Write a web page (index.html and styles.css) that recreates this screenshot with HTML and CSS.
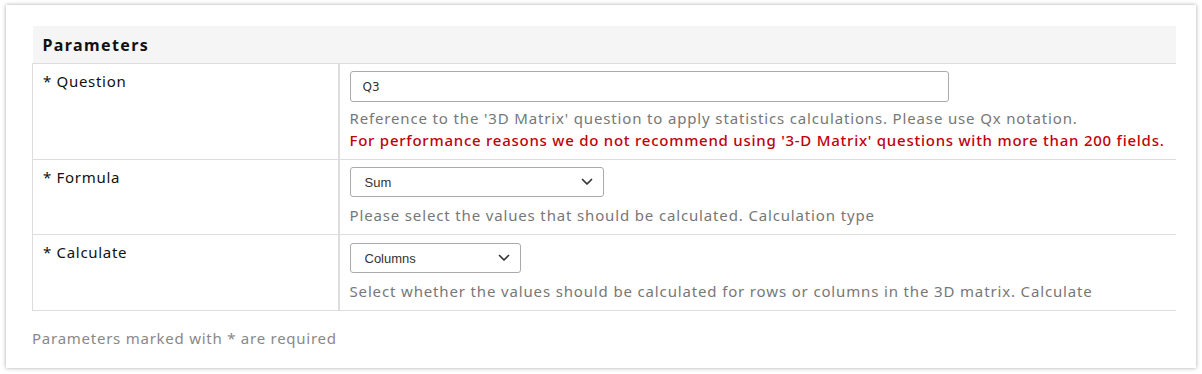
FILE: index.html
```html
<!DOCTYPE html>
<html lang="en">
<head>
  <meta charset="UTF-8" />
  <title>Parameters</title>
  <link rel="stylesheet" href="styles.css">
</head>
<body>
  <div class="card">
    <table class="params">
      <colgroup>
        <col class="col-label" />
        <col />
      </colgroup>
      <thead>
        <tr><th colspan="2">Parameters</th></tr>
      </thead>
      <tbody>
        <tr>
          <td class="label">* Question</td>
          <td class="value">
            <input class="text-input" type="text" value="Q3" />
            <div class="help">Reference to the '3D Matrix' question to apply statistics calculations. Please use Qx notation.</div>
            <div class="help warn">For performance reasons we do not recommend using '3-D Matrix' questions with more than 200 fields.</div>
          </td>
        </tr>
        <tr>
          <td class="label">* Formula</td>
          <td class="value">
            <div class="select-wrap sel-formula">
              <select><option>Sum</option></select>
              <svg class="chevron" width="12" height="8" viewBox="0 0 12 8"><path d="M1.5 1.5 L6 6 L10.5 1.5" fill="none" stroke="#333" stroke-width="1.7" stroke-linecap="round" stroke-linejoin="round"/></svg>
            </div>
            <div class="help">Please select the values that should be calculated. Calculation type</div>
          </td>
        </tr>
        <tr class="last">
          <td class="label">* Calculate</td>
          <td class="value">
            <div class="select-wrap sel-calc">
              <select><option>Columns</option></select>
              <svg class="chevron" width="12" height="8" viewBox="0 0 12 8"><path d="M1.5 1.5 L6 6 L10.5 1.5" fill="none" stroke="#333" stroke-width="1.7" stroke-linecap="round" stroke-linejoin="round"/></svg>
            </div>
            <div class="help">Select whether the values should be calculated for rows or columns in the 3D matrix. Calculate</div>
          </td>
        </tr>
      </tbody>
    </table>
    <div class="note">Parameters marked with * are required</div>
  </div>
</body>
</html>
```

FILE: styles.css
```css
body {
  margin: 0;
  padding: 5px 6px;
  background: #fff;
  font-family: "Noto Sans", sans-serif;
  color: #111;
}
.card {
  width: 1190px;
  height: 363px;
  box-sizing: border-box;
  padding: 21px 20px 0 26px;
  background: #fff;
  box-shadow: 0 0 4px rgba(0,0,0,0.35);
}
.params {
  width: 100%;
  border-collapse: collapse;
  table-layout: fixed;
}
.col-label {
  width: 306px;
}
.params th {
  background: #f5f5f5;
  text-align: left;
  font-size: 16px;
  font-weight: 700;
  letter-spacing: 1.4px;
  height: 37px;
  padding: 0 10px;
  border-bottom: 1px solid #ddd;
}
.params td {
  vertical-align: top;
  border-bottom: 1px solid #ddd;
}
.label {
  padding: 7px 10px;
  font-size: 15px;
  letter-spacing: 0.7px;
  border-left: 1px solid #ddd;
  border-right: 2px solid #ddd;
}
.value {
  padding: 7px 10px 8px;
}
.last .value {
  padding-top: 8px;
}
.text-input {
  display: block;
  width: 599px;
  height: 31px;
  box-sizing: border-box;
  border: 1px solid #aaa;
  border-radius: 3px;
  padding: 0 12px;
  font-family: "DejaVu Sans", sans-serif;
  font-size: 12px;
  color: #333;
}
.select-wrap {
  position: relative;
  height: 30px;
}
.select-wrap select {
  appearance: none;
  width: 100%;
  height: 30px;
  border: 1px solid #aaa;
  border-radius: 3px;
  background: #fff;
  padding: 0 14px;
  font-family: "Liberation Sans", sans-serif;
  font-size: 13px;
  color: #333;
}
.sel-formula { width: 254px; }
.sel-calc { width: 171px; }
.chevron {
  position: absolute;
  right: 11px;
  top: 11px;
}
.help {
  font-size: 15px;
  line-height: 22px;
  letter-spacing: 0.85px;
  color: #777;
}
.text-input + .help {
  margin-top: 5px;
}
.select-wrap + .help {
  margin-top: 7px;
}
.warn {
  color: #c0000c;
  font-weight: 500;
  letter-spacing: 0.75px;
}
.note {
  margin-top: 17px;
  font-size: 15px;
  letter-spacing: 0.75px;
  color: #888;
}
```
